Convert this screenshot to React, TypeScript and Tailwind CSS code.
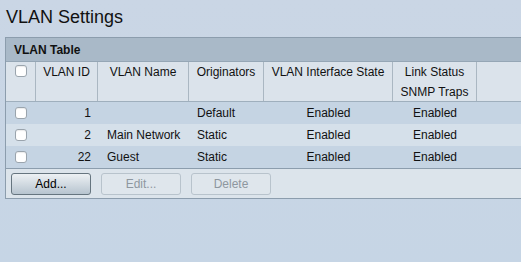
import React from "react";

const cols = [
  { w: "w-[30px]" },
  { w: "w-[62px]" },
  { w: "w-[91px]" },
  { w: "w-[75px]" },
  { w: "w-[129px]" },
  { w: "w-[84px]" },
];

function Box() {
  return (
    <span className="block w-[12px] h-[12px] rounded-[3px] border border-[#9aa4ad] bg-white shadow-[inset_0_1px_1px_rgba(0,0,0,0.08)]" />
  );
}

const rows = [
  { id: "1", name: "", orig: "Default", vis: "Enabled", link: "Enabled" },
  { id: "2", name: "Main Network", orig: "Static", vis: "Enabled", link: "Enabled" },
  { id: "22", name: "Guest", orig: "Static", vis: "Enabled", link: "Enabled" },
];

export default function App() {
  return (
    <div
      className="w-[521px] h-[262px] overflow-hidden bg-gradient-to-b from-[#cad6e5] to-[#c6d5e5] text-black"
      style={{ fontFamily: '"Liberation Sans", Arial, sans-serif' }}
    >
      <div className="pl-[6px] pt-[5px] text-[18px] leading-[24px] text-[#111]">VLAN Settings</div>
      <div className="mt-[8px] ml-[5px] w-[530px] border-l border-t border-b border-[#8c9dad] text-[12px] text-[#111]">
        <div className="h-[24px] bg-[#a9b9c8] border-b border-[#95a6b5] pl-[8px] font-bold leading-[24px]">
          VLAN Table
        </div>
        <div className="flex h-[40px] bg-[#dbe3eb] border-b border-[#9fafbd] leading-[20px] text-center">
          <div className={`${cols[0].w} shrink-0 border-r border-[#aab7c2] flex justify-center pt-[3px]`}>
            <Box />
          </div>
          <div className={`${cols[1].w} shrink-0 border-r border-[#aab7c2]`}>VLAN ID</div>
          <div className={`${cols[2].w} shrink-0 border-r border-[#aab7c2]`}>VLAN Name</div>
          <div className={`${cols[3].w} shrink-0 border-r border-[#aab7c2]`}>Originators</div>
          <div className={`${cols[4].w} shrink-0 border-r border-[#aab7c2]`}>VLAN Interface State</div>
          <div className={`${cols[5].w} shrink-0 border-r border-[#aab7c2]`}>
            Link Status
            <br />
            SNMP Traps
          </div>
          <div className="flex-1" />
        </div>
        {rows.map((r, i) => (
          <div
            key={r.id}
            className={`flex h-[22px] leading-[23px] ${i % 2 === 0 ? "bg-[#c5d4e3]" : "bg-[#d5e0ea]"}`}
          >
            <div className={`${cols[0].w} shrink-0 flex justify-center items-center`}>
              <Box />
            </div>
            <div className={`${cols[1].w} shrink-0 text-right pr-[7px]`}>{r.id}</div>
            <div className={`${cols[2].w} shrink-0 pl-[9px]`}>{r.name}</div>
            <div className={`${cols[3].w} shrink-0 pl-[8px]`}>{r.orig}</div>
            <div className={`${cols[4].w} shrink-0 text-center`}>{r.vis}</div>
            <div className={`${cols[5].w} shrink-0 text-center`}>{r.link}</div>
            <div className="flex-1" />
          </div>
        ))}
        <div className="border-t border-[#8c9dad] bg-[#dce4eb] h-[30px] flex items-start pt-[4px] pl-[5px] gap-[10px]">
          <button className="w-[80px] h-[22px] rounded-[3px] border border-[#66757f] bg-gradient-to-b from-[#edf1f4] to-[#b7c4cf] text-[12px] text-black leading-[20px]">
            Add...
          </button>
          <button className="w-[80px] h-[22px] rounded-[3px] border border-[#b8c3cc] bg-[#dfe6ec] text-[12px] text-[#8e979f] leading-[20px]">
            Edit...
          </button>
          <button className="w-[80px] h-[22px] rounded-[3px] border border-[#b8c3cc] bg-[#dfe6ec] text-[12px] text-[#8e979f] leading-[20px]">
            Delete
          </button>
        </div>
      </div>
    </div>
  );
}
